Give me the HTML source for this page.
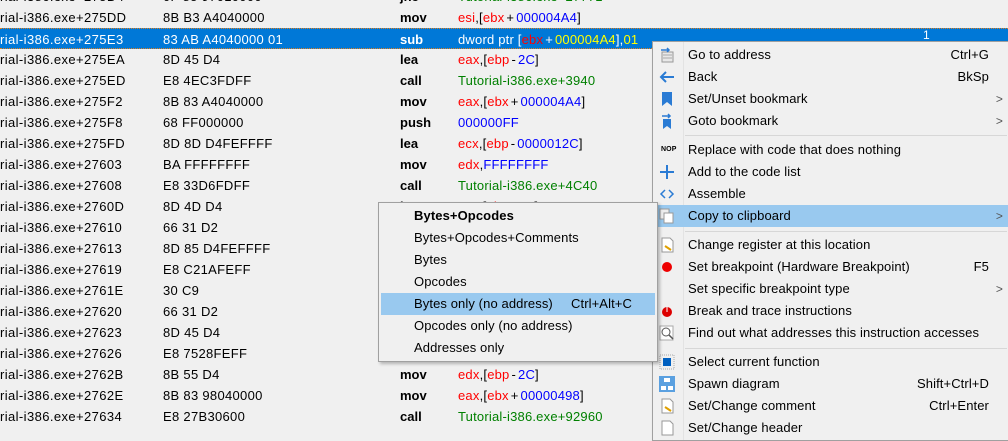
<!DOCTYPE html>
<html><head><meta charset="utf-8"><style>
*{margin:0;padding:0;box-sizing:border-box}
body{width:1008px;height:427px;overflow:hidden;background:#f0f0f0;font-family:"Liberation Sans","Noto Sans CJK SC",sans-serif;font-size:13px;color:#000;position:relative}
.r{position:absolute;left:0;width:1008px;height:21px;line-height:21px;white-space:nowrap}
.r span.a{position:absolute;left:0;letter-spacing:0.4px}
.r span.b{position:absolute;left:163px;letter-spacing:0.3px}
.r span.o{position:absolute;left:400px;font-weight:bold}
.r span.p{position:absolute;left:458px;letter-spacing:0.2px}
.pl{padding:0 2px}
.sel{background:#0078d7;color:#fff;border-top:1px dotted #e08020;border-bottom:1px dotted #e08020}
.R{color:#f00}.B{color:#00f}.G{color:#008000}.Y{color:#ff0}
.menu{position:absolute;background:#f0f0f0;border:1px solid #a0a0a0;box-shadow:2px 2px 3px rgba(0,0,0,.25)}
.mi{position:absolute;left:2px;right:2px;height:22px;line-height:22px;white-space:nowrap;letter-spacing:0.1px}
.mi .t{position:absolute;left:33px}
.mi .k{position:absolute;right:20px}
.mi .ar{position:absolute;right:6px;color:#555;font-size:12px}
.hl{background:#99c9ef}
.sep{position:absolute;left:32px;right:4px;height:1px;background:#d7d7d7}
.ic{position:absolute;left:4px;top:3px;width:16px;height:16px}
</style></head><body>

<div class="r" style="top:-14px"><span class="a">rial-i386.exe+275D4</span><span class="b">0F 85 97010000</span><span class="o">jne</span><span class="p G">Tutorial-i386.exe+27771</span></div>
<div class="r" style="top:7px"><span class="a">rial-i386.exe+275DD</span><span class="b">8B B3 A4040000</span><span class="o">mov</span><span class="p"><span class="R">esi</span>,[<span class="R">ebx</span><span class="pl">+</span><span class="B">000004A4</span>]</span></div>
<div class="r sel" style="top:28px"><span class="a">rial-i386.exe+275E3</span><span class="b">83 AB A4040000 01</span><span class="o">sub</span><span class="p">dword ptr [<span class="R">ebx</span><span class="pl">+</span><span class="Y">000004A4</span>],<span class="Y">01</span></span></div>
<div class="r" style="top:49px"><span class="a">rial-i386.exe+275EA</span><span class="b">8D 45 D4</span><span class="o">lea</span><span class="p"><span class="R">eax</span>,[<span class="R">ebp</span><span class="pl">-</span><span class="B">2C</span>]</span></div>
<div class="r" style="top:70px"><span class="a">rial-i386.exe+275ED</span><span class="b">E8 4EC3FDFF</span><span class="o">call</span><span class="p G">Tutorial-i386.exe+3940</span></div>
<div class="r" style="top:91px"><span class="a">rial-i386.exe+275F2</span><span class="b">8B 83 A4040000</span><span class="o">mov</span><span class="p"><span class="R">eax</span>,[<span class="R">ebx</span><span class="pl">+</span><span class="B">000004A4</span>]</span></div>
<div class="r" style="top:112px"><span class="a">rial-i386.exe+275F8</span><span class="b">68 FF000000</span><span class="o">push</span><span class="p B">000000FF</span></div>
<div class="r" style="top:133px"><span class="a">rial-i386.exe+275FD</span><span class="b">8D 8D D4FEFFFF</span><span class="o">lea</span><span class="p"><span class="R">ecx</span>,[<span class="R">ebp</span><span class="pl">-</span><span class="B">0000012C</span>]</span></div>
<div class="r" style="top:154px"><span class="a">rial-i386.exe+27603</span><span class="b">BA FFFFFFFF</span><span class="o">mov</span><span class="p"><span class="R">edx</span>,<span class="B">FFFFFFFF</span></span></div>
<div class="r" style="top:175px"><span class="a">rial-i386.exe+27608</span><span class="b">E8 33D6FDFF</span><span class="o">call</span><span class="p G">Tutorial-i386.exe+4C40</span></div>
<div class="r" style="top:196px"><span class="a">rial-i386.exe+2760D</span><span class="b">8D 4D D4</span><span class="o">lea</span><span class="p"><span class="R">ecx</span>,[<span class="R">ebp</span><span class="pl">-</span><span class="B">2C</span>]</span></div>
<div class="r" style="top:217px"><span class="a">rial-i386.exe+27610</span><span class="b">66 31 D2</span></div>
<div class="r" style="top:238px"><span class="a">rial-i386.exe+27613</span><span class="b">8D 85 D4FEFFFF</span></div>
<div class="r" style="top:259px"><span class="a">rial-i386.exe+27619</span><span class="b">E8 C21AFEFF</span></div>
<div class="r" style="top:280px"><span class="a">rial-i386.exe+2761E</span><span class="b">30 C9</span></div>
<div class="r" style="top:301px"><span class="a">rial-i386.exe+27620</span><span class="b">66 31 D2</span></div>
<div class="r" style="top:322px"><span class="a">rial-i386.exe+27623</span><span class="b">8D 45 D4</span></div>
<div class="r" style="top:343px"><span class="a">rial-i386.exe+27626</span><span class="b">E8 7528FEFF</span></div>
<div class="r" style="top:364px"><span class="a">rial-i386.exe+2762B</span><span class="b">8B 55 D4</span><span class="o">mov</span><span class="p"><span class="R">edx</span>,[<span class="R">ebp</span><span class="pl">-</span><span class="B">2C</span>]</span></div>
<div class="r" style="top:385px"><span class="a">rial-i386.exe+2762E</span><span class="b">8B 83 98040000</span><span class="o">mov</span><span class="p"><span class="R">eax</span>,[<span class="R">ebx</span><span class="pl">+</span><span class="B">00000498</span>]</span></div>
<div class="r" style="top:406px"><span class="a">rial-i386.exe+27634</span><span class="b">E8 27B30600</span><span class="o">call</span><span class="p G">Tutorial-i386.exe+92960</span></div>
<div style="position:absolute;left:923px;top:29px;height:13px;line-height:13px;color:#fff;font-size:12px">1</div>

<!-- main menu -->
<div class="menu" style="left:652px;top:41px;width:360px;height:400px">
<div style="position:absolute;left:30px;top:0;bottom:0;width:1px;background:#e3e3e3"></div>
<div class="mi" style="top:2px"><svg class="ic" viewBox="0 0 16 16"><rect x="3" y="5" width="11" height="10" fill="#e8e8e8" stroke="#999"/><path d="M4 8h9M4 11h9" stroke="#aaa"/><path d="M2 3h8M8 1l2 2-2 2" stroke="#2a7bd4" fill="none" stroke-width="1.5"/></svg><span class="t">Go to address</span><span class="k">Ctrl+G</span></div>
<div class="mi" style="top:24px"><svg class="ic" viewBox="0 0 16 16"><path d="M15 8H2M7 3L2 8l5 5" stroke="#2a7bd4" fill="none" stroke-width="2"/></svg><span class="t">Back</span><span class="k">BkSp</span></div>
<div class="mi" style="top:46px"><svg class="ic" viewBox="0 0 16 16"><path d="M3 1h10v14l-5-4-5 4z" fill="#2a7bd4"/></svg><span class="t">Set/Unset bookmark</span><span class="ar">&gt;</span></div>
<div class="mi" style="top:68px"><svg class="ic" viewBox="0 0 16 16"><path d="M4 6h8v10l-4-3-4 3z" fill="#2a7bd4"/><path d="M3 3h8M9 1l2 2-2 2" stroke="#2a7bd4" fill="none" stroke-width="1.5"/></svg><span class="t">Goto bookmark</span><span class="ar">&gt;</span></div>
<div class="sep" style="top:93px"></div>
<div class="mi" style="top:97px"><span style="position:absolute;left:6px;font-size:7px;font-weight:bold">NOP</span><span class="t">Replace with code that does nothing</span></div>
<div class="mi" style="top:119px"><svg class="ic" viewBox="0 0 16 16"><path d="M8 1v14M1 8h14" stroke="#2a7bd4" stroke-width="2"/></svg><span class="t">Add to the code list</span></div>
<div class="mi" style="top:141px"><svg class="ic" viewBox="0 0 16 16"><path d="M6 4L2 8l4 4M10 4l4 4-4 4" stroke="#2a7bd4" fill="none" stroke-width="1.5"/></svg><span class="t">Assemble</span></div>
<div class="mi hl" style="top:163px"><svg class="ic" viewBox="0 0 16 16"><rect x="1" y="1" width="9" height="10" fill="#eee" stroke="#999"/><rect x="5" y="5" width="9" height="10" fill="#fff" stroke="#999"/></svg><span class="t">Copy to clipboard</span><span class="ar">&gt;</span></div>
<div class="sep" style="top:189px"></div>
<div class="mi" style="top:192px"><svg class="ic" viewBox="0 0 16 16"><path d="M3 1h8l3 3v11H3z" fill="#fff" stroke="#999"/><path d="M6 9l6 4" stroke="#e0a000" stroke-width="2"/></svg><span class="t">Change register at this location</span></div>
<div class="mi" style="top:214px"><svg class="ic" viewBox="0 0 16 16"><circle cx="8" cy="8" r="5" fill="#e00"/></svg><span class="t">Set breakpoint (Hardware Breakpoint)</span><span class="k">F5</span></div>
<div class="mi" style="top:236px"><span class="t">Set specific breakpoint type</span><span class="ar">&gt;</span></div>
<div class="mi" style="top:258px"><svg class="ic" viewBox="0 0 16 16"><circle cx="8" cy="9" r="5" fill="#d00"/><path d="M8 4v5" stroke="#fff"/></svg><span class="t">Break and trace instructions</span></div>
<div class="mi" style="top:280px"><svg class="ic" viewBox="0 0 16 16"><rect x="1" y="1" width="13" height="14" fill="#fff" stroke="#aaa"/><circle cx="7" cy="7" r="4" fill="none" stroke="#555"/><path d="M10 10l4 4" stroke="#555" stroke-width="1.5"/></svg><span class="t">Find out what addresses this instruction accesses</span></div>
<div class="sep" style="top:306px"></div>
<div class="mi" style="top:309px"><svg class="ic" viewBox="0 0 16 16"><rect x="1" y="1" width="14" height="14" fill="none" stroke="#aaa" stroke-dasharray="1 1"/><rect x="4" y="4" width="8" height="8" fill="#0060c0"/></svg><span class="t">Select current function</span></div>
<div class="mi" style="top:331px"><svg class="ic" viewBox="0 0 16 16"><rect x="0" y="0" width="16" height="16" fill="#5aa0e0"/><rect x="5" y="2" width="6" height="4" fill="#fff"/><rect x="2" y="10" width="5" height="4" fill="#fff"/><rect x="9" y="10" width="5" height="4" fill="#fff"/></svg><span class="t">Spawn diagram</span><span class="k">Shift+Ctrl+D</span></div>
<div class="mi" style="top:353px"><svg class="ic" viewBox="0 0 16 16"><path d="M3 1h8l3 3v11H3z" fill="#fff" stroke="#999"/><path d="M6 9l6 4" stroke="#e0a000" stroke-width="2"/></svg><span class="t">Set/Change comment</span><span class="k">Ctrl+Enter</span></div>
<div class="mi" style="top:375px"><svg class="ic" viewBox="0 0 16 16"><path d="M3 1h8l3 3v11H3z" fill="#fff" stroke="#999"/></svg><span class="t">Set/Change header</span></div>
</div>

<!-- submenu -->
<div class="menu" style="left:378px;top:202px;width:280px;height:160px">
<div class="mi" style="top:2px"><span class="t" style="font-weight:bold">Bytes+Opcodes</span></div>
<div class="mi" style="top:24px"><span class="t">Bytes+Opcodes+Comments</span></div>
<div class="mi" style="top:46px"><span class="t">Bytes</span></div>
<div class="mi" style="top:68px"><span class="t">Opcodes</span></div>
<div class="mi hl" style="top:90px"><span class="t">Bytes only (no address)</span><span style="position:absolute;left:190px">Ctrl+Alt+C</span></div>
<div class="mi" style="top:112px"><span class="t">Opcodes only (no address)</span></div>
<div class="mi" style="top:134px"><span class="t">Addresses only</span></div>
</div>
</body></html>
